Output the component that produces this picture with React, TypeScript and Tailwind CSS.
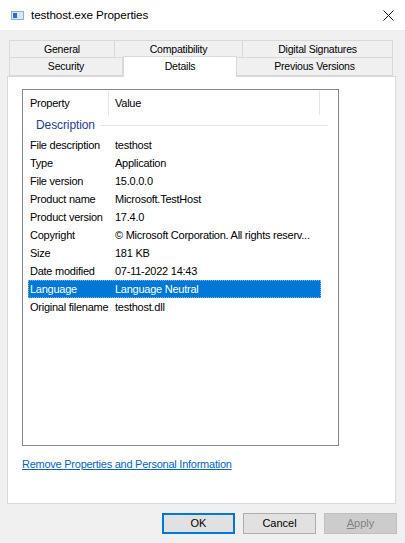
import React from "react";

const rows: [string, string][] = [
  ["File description", "testhost"],
  ["Type", "Application"],
  ["File version", "15.0.0.0"],
  ["Product name", "Microsoft.TestHost"],
  ["Product version", "17.4.0"],
  ["Copyright", "© Microsoft Corporation. All rights reserv..."],
  ["Size", "181 KB"],
  ["Date modified", "07-11-2022 14:43"],
  ["Language", "Language Neutral"],
  ["Original filename", "testhost.dll"],
];

export default function App() {
  return (
    <div
      className="w-[405px] h-[543px] bg-[#f0f0f0] flex flex-col text-black overflow-hidden"
      style={{ fontFamily: '"Liberation Sans", Arial, sans-serif' }}
    >
      {/* Title bar */}
      <div className="h-[30px] bg-white flex items-center shrink-0">
        <svg width="13" height="9" viewBox="0 0 13 9" className="ml-[11px]">
          <rect x="0.5" y="0.5" width="12" height="8" fill="#dbe7f5" stroke="#8fb1d8" />
          <rect x="2" y="2" width="4" height="5" fill="#2a6fc9" />
        </svg>
        <span className="ml-[7px] text-[11.7px] leading-none tracking-[-0.1px]">testhost.exe Properties</span>
        <svg width="11" height="11" viewBox="0 0 11 11" className="ml-auto mr-[11px]">
          <path d="M0.5 0.5 L10.5 10.5 M10.5 0.5 L0.5 10.5" stroke="#111" strokeWidth="1" />
        </svg>
      </div>

      {/* Tabs */}
      <div className="mt-[10px] ml-[9px] flex flex-col text-[10.5px] tracking-[-0.2px]">
        <div className="flex h-[18px]">
          <div className="w-[106px] border border-[#d9d9d9] bg-[#f0f0f0] flex items-center justify-center pt-[2px]">General</div>
          <div className="w-[128px] border border-l-0 border-[#d9d9d9] bg-[#f0f0f0] flex items-center justify-center pt-[2px]">Compatibility</div>
          <div className="w-[150px] border border-l-0 border-[#d9d9d9] bg-[#f0f0f0] flex items-center justify-center pt-[2px]">Digital Signatures</div>
        </div>
        <div className="flex h-[18px]">
          <div className="w-[114px] border border-t-0 border-[#d9d9d9] bg-[#f0f0f0] flex items-center justify-center pt-[1px]">Security</div>
          <div className="relative z-10 w-[114px] h-[21px] -mt-[2px] border border-b-0 border-[#d9d9d9] bg-white flex items-start justify-center pt-[2px]">Details</div>
          <div className="w-[156px] border border-t-0 border-l-0 border-[#d9d9d9] bg-[#f0f0f0] flex items-center justify-center pt-[1px]">Previous Versions</div>
        </div>
      </div>

      {/* Panel */}
      <div className="ml-[7px] w-[389px] h-[428px] bg-white border border-[#d9d9d9] flex flex-col pl-[14px] pt-[12px]">
        <div className="w-[317px] h-[357px] border border-[#828790] flex flex-col text-[11px] tracking-[-0.25px]">
          {/* header */}
          <div className="h-[26px] flex items-stretch">
            <div className="w-[86px] flex items-center pl-[7px] border-r border-[#e5e5e5] my-[1px]">Property</div>
            <div className="w-[211px] flex items-center pl-[6px] border-r border-[#e5e5e5] my-[1px]">Value</div>
          </div>
          {/* group */}
          <div className="h-[18px] flex items-center pl-[13px] pr-[10px]">
            <span className="text-[#1e3c96] text-[12px] tracking-[-0.1px]">Description</span>
            <div className="flex-1 h-px bg-[#e3e3e3] ml-[5px]" />
          </div>
          {/* rows */}
          <div className="flex flex-col pl-[5px] pt-[2px]">
            {rows.map(([k, v]) => {
              const sel = k === "Language";
              return (
                <div
                  key={k}
                  className={
                    "h-[18px] w-[293px] flex items-center " +
                    (sel ? "bg-[#0078d7] text-white outline outline-1 outline-dotted outline-[#7fb6e6] -outline-offset-1" : "")
                  }
                >
                  <span className="w-[87px] pl-[2px] whitespace-nowrap">{k}</span>
                  <span className="whitespace-nowrap">{v}</span>
                </div>
              );
            })}
          </div>
        </div>
        <div className="mt-[13px] text-[11px] tracking-[-0.25px] text-[#0066cc] underline leading-none">
          Remove Properties and Personal Information
        </div>
      </div>

      {/* Buttons */}
      <div className="mt-[9px] flex justify-end gap-[8px] pr-[8px] text-[11px]">
        <button className="w-[73px] h-[21px] bg-[#e1e1e1] border-2 border-[#0078d7] flex items-center justify-center">OK</button>
        <button className="w-[73px] h-[21px] bg-[#e1e1e1] border border-[#adadad] flex items-center justify-center">Cancel</button>
        <button className="w-[73px] h-[21px] bg-[#cccccc] border border-[#bfbfbf] text-[#838383] flex items-center justify-center">
          <span><span className="underline">A</span>pply</span>
        </button>
      </div>
    </div>
  );
}
